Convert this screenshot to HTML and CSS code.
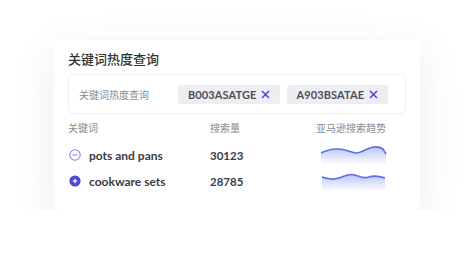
FILE: index.html
```html
<!DOCTYPE html>
<html lang="zh-CN">
<head>
    <meta charset="UTF-8">
    <title>关键词热度查询</title>
    <link rel="stylesheet" href="styles.css">
</head>
<body>
    <div class="card">
        <h2 class="title">关键词热度查询</h2>
        <div class="query">
            <span class="query-label">关键词热度查询</span>
            <span class="tag">B003ASATGE
                <svg class="x" width="9" height="9" viewBox="0 0 9 9"><path d="M1 1 L8 8 M8 1 L1 8" stroke="#4b46d8" stroke-width="1.5"/></svg>
            </span>
            <span class="tag">A903BSATAE
                <svg class="x" width="9" height="9" viewBox="0 0 9 9"><path d="M1 1 L8 8 M8 1 L1 8" stroke="#4b46d8" stroke-width="1.5"/></svg>
            </span>
        </div>
        <div class="row head">
            <span class="c1">关键词</span>
            <span class="c2">搜索量</span>
            <span class="c3">亚马逊搜索趋势</span>
        </div>
        <div class="row">
            <span class="c1">
                <svg class="ico" width="12" height="12" viewBox="0 0 12 12">
                    <circle cx="6" cy="6" r="5.2" fill="none" stroke="#8b86e6" stroke-width="1.1"/>
                    <line x1="3.6" y1="6" x2="8.4" y2="6" stroke="#8b86e6" stroke-width="1.1"/>
                </svg>
                pots and pans
            </span>
            <span class="c2 num">30123</span>
            <span class="c3">
                <svg width="66" height="20" viewBox="0 0 66 20">
                    <defs>
                        <linearGradient id="g1" x1="0" y1="0" x2="0" y2="1">
                            <stop offset="0" stop-color="#b9c3f7"/>
                            <stop offset="1" stop-color="#ffffff"/>
                        </linearGradient>
                    </defs>
                    <path d="M0 8 C8 4,16 3,24 5 S34 10,42 6 S56 0,62 4 L65 9 L65 20 L0 20 Z" fill="url(#g1)"/>
                    <path d="M0 8 C8 4,16 3,24 5 S34 10,42 6 S56 0,62 4 L65 9" fill="none" stroke="#5a6ee6" stroke-width="1.6"/>
                </svg>
            </span>
        </div>
        <div class="row">
            <span class="c1">
                <svg class="ico" width="12" height="12" viewBox="0 0 12 12">
                    <circle cx="6" cy="6" r="5.6" fill="#4b46d8"/>
                    <line x1="3.8" y1="6" x2="8.2" y2="6" stroke="#fff" stroke-width="1.2"/>
                    <line x1="6" y1="3.8" x2="6" y2="8.2" stroke="#fff" stroke-width="1.2"/>
                </svg>
                cookware sets
            </span>
            <span class="c2 num">28785</span>
            <span class="c3">
                <svg width="66" height="20" viewBox="0 0 66 20">
                    <defs>
                        <linearGradient id="g2" x1="0" y1="0" x2="0" y2="1">
                            <stop offset="0" stop-color="#b9c3f7"/>
                            <stop offset="1" stop-color="#ffffff"/>
                        </linearGradient>
                    </defs>
                    <path d="M1 6 C8 8,12 9,18 7 S28 2,34 4 S42 8,48 6 S58 5,64 7 L64 20 L1 20 Z" fill="url(#g2)"/>
                    <path d="M1 6 C8 8,12 9,18 7 S28 2,34 4 S42 8,48 6 S58 5,64 7" fill="none" stroke="#5a6ee6" stroke-width="1.6"/>
                </svg>
            </span>
        </div>
    </div>
</body>
</html>
```
FILE: styles.css
```css
body { margin: 0; background: #fff; font-family: "Lato", "Noto Sans CJK SC", sans-serif; }
.card { width: 366px; margin: 40px 0 0 54px; padding: 10px 14px 16px; box-sizing: border-box; background: #fff; border-radius: 6px; box-shadow: 0 12px 44px rgba(60, 70, 120, 0.10); }
.title { margin: 0 0 6px; font-size: 13px; font-weight: 500; color: #333; line-height: 18px; font-family: "Noto Sans CJK SC", sans-serif; }
.query { display: flex; align-items: center; height: 40px; padding: 0 10px; border: 1px solid #eef0f3; border-radius: 5px; box-sizing: border-box; }
.query-label { width: 102px; font-size: 10px; color: #8a8c94; font-family: "Noto Sans CJK SC", sans-serif; }
.tag { display: flex; align-items: center; justify-content: space-between; width: 104px; height: 19px; margin-right: 7px; padding: 0 10px 0 10px; box-sizing: border-box; background: #eceef3; border-radius: 3px; font-size: 11px; font-weight: 700; color: #4d4f57; letter-spacing: 0.1px; }
.x { display: block; }
.row { display: flex; align-items: center; height: 26px; font-size: 12px; color: #3a3c44; font-weight: 700; }
.num { font-size: 11.5px; }
.row.head { height: 22px; margin-top: 2px; margin-bottom: 4px; font-size: 10px; font-weight: 400; color: #888b94; font-family: "Noto Sans CJK SC", sans-serif; }
.c1 { display: flex; align-items: center; width: 142px; }
.c2 { width: 106px; }
.c3 { flex: 1; display: flex; }
.row .c3 svg { display: block; margin-left: 5px; }
.ico { margin: 0 8px 0 1px; }
```
